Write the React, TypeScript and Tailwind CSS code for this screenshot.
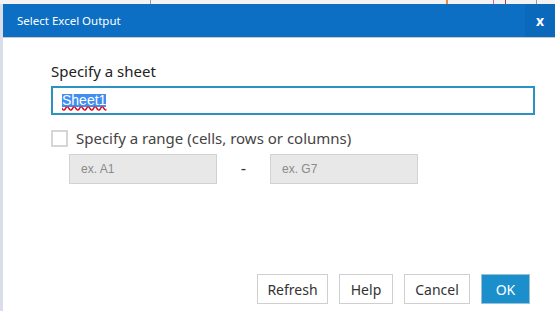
import React from "react";

function Btn({ label, w, primary }: { label: string; w: string; primary?: boolean }) {
  return (
    <button
      className={`h-[30px] ${w} border text-[14px] ${
        primary
          ? "bg-[#1b8fcb] border-[#9bbfd4] text-white"
          : "bg-white border-[#cfcfcf] text-[#333]"
      }`}
    >
      {label}
    </button>
  );
}

export default function App() {
  return (
    <div
      className="w-[555px] h-[311px] flex flex-col bg-white overflow-hidden"
      style={{ fontFamily: '"Noto Sans", sans-serif' }}
    >
      {/* background window peeking through */}
      <div className="h-[4px] bg-[#f3f3f3] flex">
        <div className="ml-[150px] w-[1px] bg-[#9a9a9a]" />
        <div className="ml-[295px] w-[2px] bg-[#f08a3c]" />
        <div className="ml-[45px] w-[1px] bg-[#e86080]" />
        <div className="ml-[11px] w-[1px] bg-[#d03030]" />
        <div className="ml-[30px] w-[1px] bg-[#9a9a9a]" />
      </div>
      <div className="flex flex-1">
        <div className="w-[3px] bg-[#d9deea]" />
        <div className="flex-1 flex flex-col">
          {/* title bar */}
          <div className="h-[33px] bg-[#0c6fc3] flex items-center">
            <span className="pl-[14px] text-white text-[11.5px] flex-1">Select Excel Output</span>
            <div className="w-[30px] h-full bg-[#0a69ba] flex items-center justify-center text-white font-bold text-[14px]">
              x
            </div>
          </div>
          <div className="h-[1px] bg-[#c8c8c8]" />

          {/* body */}
          <div className="flex-1 flex flex-col pl-[48px] pr-[20px]">
            <div className="mt-[21px] text-[15px] leading-[24px] text-[#222]">Specify a sheet</div>
            <div className="mt-[3px] h-[29px] border-2 border-[#2b93c4] flex items-center pl-[9px]">
              <span
                className="bg-[#3f8ef0] text-white text-[14px] leading-[13px] underline decoration-wavy decoration-red-600"
                style={{ fontFamily: '"Liberation Sans", sans-serif' }}
              >
                Sheet1
              </span>
            </div>

            <div className="mt-[13px] flex items-center">
              <div className="w-[17px] h-[17px] border-2 border-[#d6d6d6] bg-white" />
              <span className="ml-[8px] text-[15px] leading-[20px] text-[#444]">
                Specify a range (cells, rows or columns)
              </span>
            </div>

            <div
              className="mt-[6px] ml-[18px] flex items-center"
              style={{ fontFamily: '"Liberation Sans", sans-serif' }}
            >
              <div className="w-[148px] h-[30px] bg-[#e8e8e8] border border-[#d2d2d2] flex items-center pl-[11px] text-[12px] text-[#8a8a8a]">
                ex. A1
              </div>
              <div className="w-[53px] text-center text-[16px] text-[#333]">-</div>
              <div className="w-[148px] h-[30px] bg-[#e8e8e8] border border-[#d2d2d2] flex items-center pl-[11px] text-[12px] text-[#8a8a8a]">
                ex. G7
              </div>
            </div>

            <div className="mt-auto mb-[7px] flex justify-end gap-[11px] pr-[5px]">
              <Btn label="Refresh" w="w-[71px]" />
              <Btn label="Help" w="w-[54px]" />
              <Btn label="Cancel" w="w-[66px]" />
              <Btn label="OK" w="w-[49px]" primary />
            </div>
          </div>
        </div>
      </div>
    </div>
  );
}
